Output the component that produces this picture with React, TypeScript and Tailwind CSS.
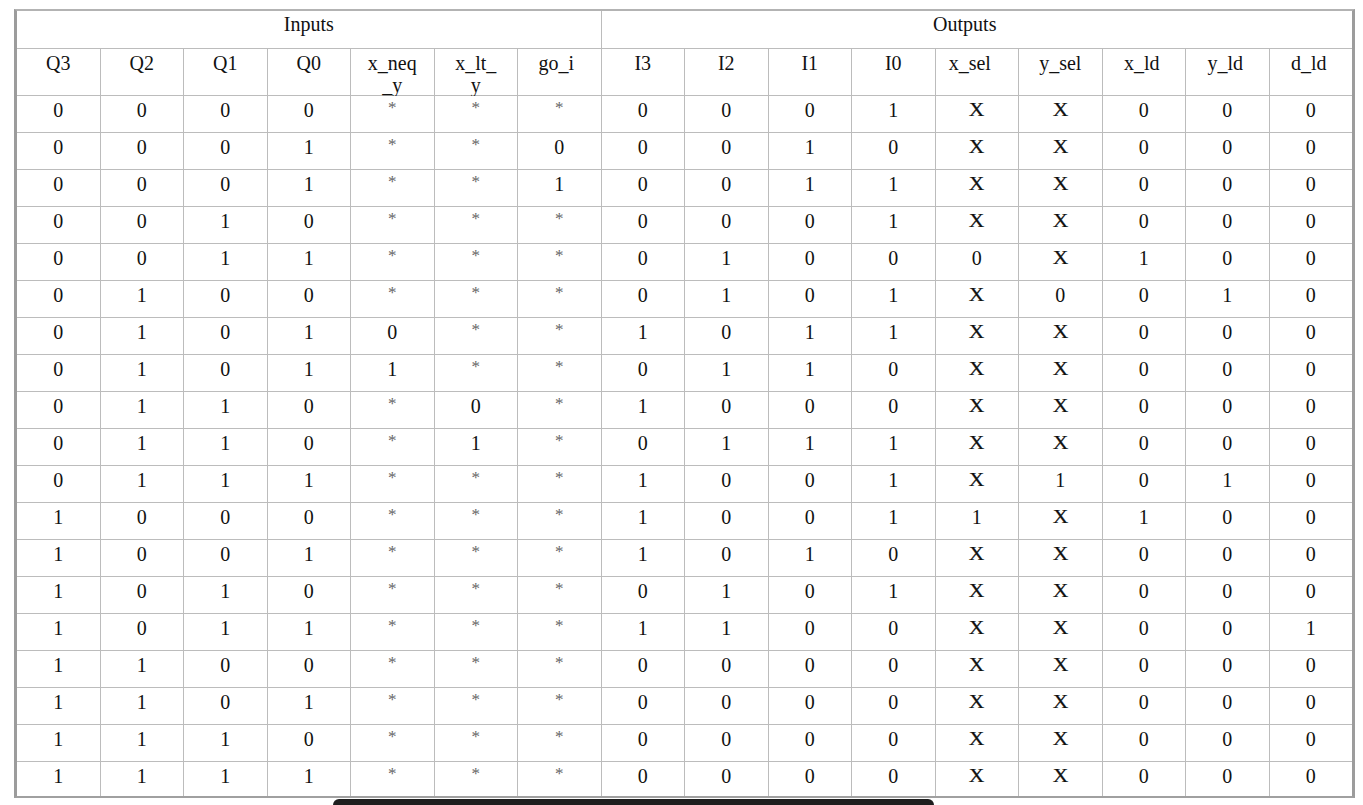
import React from "react";

const headers: { t: string; cls: string }[] = [
  { t: "Q3", cls: "px-[16px]" },
  { t: "Q2", cls: "px-[16px]" },
  { t: "Q1", cls: "px-[16px]" },
  { t: "Q0", cls: "px-[16px]" },
  { t: "x_neq_y", cls: "px-[16px]" },
  { t: "x_lt_y", cls: "px-[16px]" },
  { t: "go_i", cls: "pl-[12px] pr-[18px]" },
  { t: "I3", cls: "px-[16px]" },
  { t: "I2", cls: "px-[16px]" },
  { t: "I1", cls: "px-[16px]" },
  { t: "I0", cls: "px-[16px]" },
  { t: "x_sel", cls: "pl-[4px] pr-[18px]" },
  { t: "y_sel", cls: "px-[8px]" },
  { t: "x_ld", cls: "pl-[8px] pr-[12px]" },
  { t: "y_ld", cls: "pl-[8px] pr-[12px]" },
  { t: "d_ld", cls: "pl-[8px] pr-[12px]" },
];

const rows = [
  "0000***|0001XX000",
  "0001**0|0010XX000",
  "0001**1|0011XX000",
  "0010***|0001XX000",
  "0011***|01000X100",
  "0100***|0101X0010",
  "01010**|1011XX000",
  "01011**|0110XX000",
  "0110*0*|1000XX000",
  "0110*1*|0111XX000",
  "0111***|1001X1010",
  "1000***|10011X100",
  "1001***|1010XX000",
  "1010***|0101XX000",
  "1011***|1100XX001",
  "1100***|0000XX000",
  "1101***|0000XX000",
  "1110***|0000XX000",
  "1111***|0000XX000",
];

function Cell({ v }: { v: string }) {
  if (v === "*") {
    return (
      <div className="bg-white text-center pt-[2px] text-[17px] leading-[19px] text-[#666]">*</div>
    );
  }
  if (v === "X") {
    return (
      <div className="bg-white text-center pt-[2px]">
        <span className="inline-block text-[18px] leading-[22px] scale-x-[1.2] [-webkit-text-stroke:0.2px_#111]">X</span>
      </div>
    );
  }
  return <div className="bg-white text-center pt-[3px]">{v}</div>;
}

export default function App() {
  return (
    <div
      className="w-[1363px] h-[805px] bg-white relative overflow-hidden text-[20px] leading-[22px] text-[#111]"
      style={{ fontFamily: '"Liberation Serif", "Times New Roman", serif' }}
    >
      <div className="ml-[14px] mt-[9px] w-[1341px] border-t-2 border-b-2 border-l-[3px] border-r-[3px] border-t-[#b3b3b3] border-b-[#a0a0a0] border-l-[#9c9c9c] border-r-[#9c9c9c]">
        <div className="grid grid-cols-16 gap-px bg-[#bcbcbc] grid-rows-[37px_46px_repeat(18,36px)_34px]">
          <div className="col-span-7 bg-white text-center pt-[2px]">Inputs</div>
          <div className="col-span-9 bg-white text-center pt-[2px] pr-[24px]">Outputs</div>
          {headers.map((h) => (
            <div key={h.t} className={"bg-white pt-[3px] text-center break-all overflow-visible " + h.cls}>
              {h.t}
            </div>
          ))}
          {rows.map((r, i) =>
            r
              .replace("|", "")
              .split("")
              .map((v, j) => <Cell key={i + "-" + j} v={v} />)
          )}
        </div>
      </div>
      <div className="absolute left-[333px] top-[799px] w-[601px] h-[10px] bg-[#1e1e1e] rounded-t-[6px]" />
    </div>
  );
}
